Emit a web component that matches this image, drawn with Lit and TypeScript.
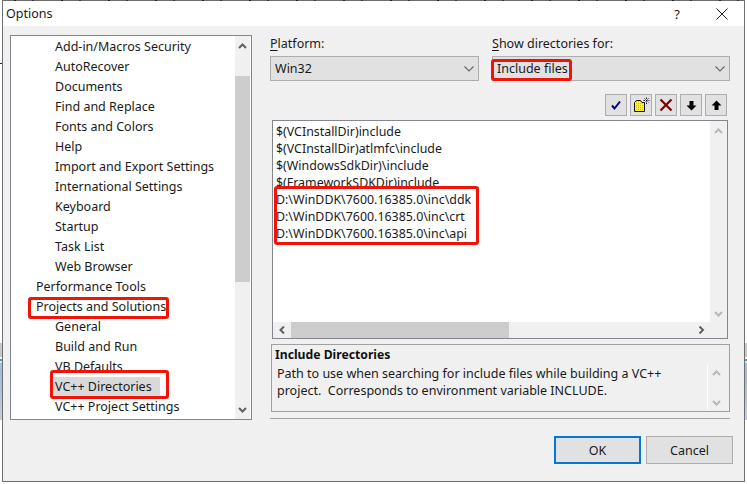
import { LitElement, html, css } from "lit";
import { customElement } from "lit/decorators.js";

const tree: [string, number, string?][] = [
  ["Add-in/Macros Security", 2],
  ["AutoRecover", 2],
  ["Documents", 2],
  ["Find and Replace", 2],
  ["Fonts and Colors", 2],
  ["Help", 2],
  ["Import and Export Settings", 2],
  ["International Settings", 2],
  ["Keyboard", 2],
  ["Startup", 2],
  ["Task List", 2],
  ["Web Browser", 2],
  ["Performance Tools", 1],
  ["Projects and Solutions", 1],
  ["General", 2],
  ["Build and Run", 2],
  ["VB Defaults", 2],
  ["VC++ Directories", 2, "sel"],
  ["VC++ Project Settings", 2],
];

const dirs = [
  "$(VCInstallDir)include",
  "$(VCInstallDir)atlmfc\\include",
  "$(WindowsSdkDir)\\include",
  "$(FrameworkSDKDir)include",
  "D:\\WinDDK\\7600.16385.0\\inc\\ddk",
  "D:\\WinDDK\\7600.16385.0\\inc\\crt",
  "D:\\WinDDK\\7600.16385.0\\inc\\api",
];

const chev = (d: string, color = "#606060") => {
  const p: Record<string, string> = {
    up: "M1 6 L4.5 2.5 L8 6",
    down: "M1 2 L4.5 5.5 L8 2",
    left: "M6 0.5 L2.5 4 L6 7.5",
    right: "M2.5 0.5 L6 4 L2.5 7.5",
  };
  return html`<svg width="9" height="8" viewBox="0 0 9 8"><path d=${p[d]} fill="none" stroke=${color} stroke-width="2"/></svg>`;
};

const combo = html`<svg width="10" height="6" viewBox="0 0 10 6"><path d="M0.5 0.5 L5 5 L9.5 0.5" fill="none" stroke="#666" stroke-width="1.1"/></svg>`;

@customElement("app-root")
export class AppRoot extends LitElement {
  static styles = css`
    :host { display: block; width: 747px; height: 484px; overflow: hidden; background: #fff; font-family: "Noto Sans", "Open Sans", sans-serif; font-size: 12.5px; color: #1a1a1a; }
    .root { position: relative; width: 747px; height: 484px; }
    .win { width: 743px; height: 482px; margin-left: 2px; border: 1px solid #6e6e6e; box-sizing: border-box; background: #f0f0f0; display: flex; flex-direction: column; }
    .title { height: 25px; flex: none; background: #fff; display: flex; align-items: center; padding-left: 3px; }
    .title .t { flex: 1; }
    .title .q { width: 20px; text-align: center; font-size: 13px; margin-right: 28px; }
    .title .x { margin-right: 15px; display: flex; }
    .body { flex: 1; display: flex; padding: 9px 11px 0 7px; gap: 18px; }
    .tree { width: 242px; height: 385px; flex: none; box-sizing: border-box; border: 1px solid #85858d; background: #fff; display: flex; }
    .items { flex: 1; overflow: hidden; padding-top: 1px; }
    .item { height: 20px; line-height: 20px; white-space: nowrap; display: flex; }
    .item span { padding: 0 4px 0 2px; }
    .l1 { padding-left: 23px; }
    .l2 { padding-left: 42px; }
    .item.sel span { background: #d9d9d9; padding-right: 8px; }
    .vbar { width: 15px; flex: none; margin-right: 1px; background: #f0f0f0; display: flex; flex-direction: column; align-items: center; padding: 2px 0 1px; box-sizing: border-box; }
    .b { display: flex; align-items: center; justify-content: center; flex: none; height: 16px; }
    .gap { height: 22px; flex: none; }
    .thumb { width: 100%; height: 206px; flex: none; background: #cdcdcd; }
    .track { flex: 1; }
    .right { flex: 1; display: flex; flex-direction: column; min-width: 0; }
    .selectors { display: flex; gap: 13px; }
    .fld { display: flex; flex-direction: column; gap: 4px; }
    .fld label { height: 17px; line-height: 17px; }
    u { text-decoration-thickness: 1px; text-underline-offset: 2px; }
    .combo { height: 25px; box-sizing: border-box; border: 1px solid #adadad; background: #e1e1e1; display: flex; align-items: center; justify-content: space-between; padding: 0 4px 0 4px; }
    .p { width: 209px; }
    .s { width: 238px; }
    .tools { display: flex; justify-content: flex-end; gap: 3px; padding: 13px 6px 0 0; height: 22px; }
    .tb { width: 22px; height: 22px; box-sizing: border-box; border: 1px solid #adadad; background: #e1e1e1; display: flex; align-items: center; justify-content: center; }
    .list { margin: 4px 0 0 2px; width: 456px; height: 219px; flex: none; box-sizing: border-box; border: 1px solid #85858d; background: #fff; display: grid; grid-template-columns: 1fr 17px; grid-template-rows: 1fr 16px; font-size: 12.4px; }
    .rows { padding: 2px 0 0 3px; overflow: hidden; }
    .rows div { height: 17px; line-height: 17px; white-space: nowrap; }
    .lv { background: #f0f0f0; display: flex; flex-direction: column; justify-content: space-between; align-items: center; padding-top: 2px; }
    .hbar { background: #f0f0f0; display: flex; align-items: center; }
    .hbar .b { width: 18px; }
    .hthumb { width: 218px; height: 16px; flex: none; background: #cdcdcd; }
    .corner { background: #f0f0f0; }
    .desc { margin: 5px 0 0 1px; width: 459px; height: 68px; flex: none; box-sizing: border-box; border: 1px solid #a0a0a0; display: grid; grid-template-columns: 1fr 22px; grid-template-rows: 20px 1fr; padding-left: 3px; }
    .desc h4 { margin: 0; grid-column: 1 / 3; font-size: 12.2px; line-height: 19px; font-weight: 700; color: #111; }
    .desc p { margin: 0; line-height: 17px; padding-left: 2px; white-space: pre; }
    .dv { border-left: 1px solid #fff; display: flex; flex-direction: column; justify-content: space-between; align-items: center; padding: 5px 4px 3px 0; height: 46px; box-sizing: border-box; margin-top: -1px; }
    .sep { margin-top: 6px; width: 460px; height: 1px; background: #a0a0a0; flex: none; }
    .btns { display: flex; justify-content: flex-end; gap: 5px; margin-top: 17px; }
    .btn { height: 28px; width: 87px; box-sizing: border-box; border: 1px solid #adadad; background: #e1e1e1; display: flex; align-items: center; justify-content: center; }
    .ok { border: 2px solid #0078d7; }
    .mark { position: absolute; border: 3px solid #f01408; border-radius: 3px; box-sizing: border-box; pointer-events: none; }
    .m1 { left: 28px; top: 297px; width: 141px; height: 22px; }
    .m2 { left: 50px; top: 370px; width: 119px; height: 29px; }
    .m3 { left: 491px; top: 59px; width: 81px; height: 22px; }
    .m4 { left: 274px; top: 186px; width: 205px; height: 59px; }
    .frag { position: absolute; top: 343px; height: 77px; width: 2px; background: linear-gradient(#c8c8c8 0 14px, #fff 14px 16px, #3f9fb0 16px 18px, #d8e8ee 18px 20px, #9fc0dc 20px, #a9bfdc 55%, #c9cedb); }
    .fl { left: 0; }
    .fr { left: 745px; }
    .top { position: absolute; left: 3px; top: 0; width: 741px; height: 1px; background: repeating-linear-gradient(90deg, #6e6e6e 0 11px, #222 11px 13px, #6e6e6e 13px 29px, #2c3a55 29px 31px, #6e6e6e 31px 47px); }
    .tick { position: absolute; left: 0; top: 63px; width: 2px; height: 1px; background: #222; }
  `;

  render() {
    return html`<div class="root">
      <div class="win">
        <div class="title">
          <div class="t">Options</div>
          <div class="q">?</div>
          <div class="x"><svg width="14" height="14" viewBox="0 0 14 14"><path d="M1.5 1.5 L12.5 12.5 M12.5 1.5 L1.5 12.5" stroke="#222" stroke-width="1" fill="none"/></svg></div>
        </div>
        <div class="body">
          <div class="tree">
            <div class="items">
              ${tree.map(([t, l, s]) => html`<div class="item l${l} ${s ?? ""}"><span>${t}</span></div>`)}
            </div>
            <div class="vbar">
              <div class="b">${chev("up")}</div>
              <div class="gap"></div>
              <div class="thumb"></div>
              <div class="track"></div>
              <div class="b">${chev("down")}</div>
            </div>
          </div>
          <div class="right">
            <div class="selectors">
              <div class="fld p"><label><u>P</u>latform:</label><div class="combo"><span>Win32</span>${combo}</div></div>
              <div class="fld s"><label><u>S</u>how directories for:</label><div class="combo"><span>Include files</span>${combo}</div></div>
            </div>
            <div class="tools">
              <div class="tb"><svg width="12" height="12" viewBox="0 0 12 12"><path d="M2 6.5 L4.5 9.5 L10 2.5" fill="none" stroke="#000080" stroke-width="2"/></svg></div>
              <div class="tb"><svg width="18" height="16" viewBox="0 0 18 16">
                <defs><pattern id="dith" width="2" height="2" patternUnits="userSpaceOnUse"><rect width="2" height="2" fill="#fff030"/><rect width="1" height="1" fill="#b8b890"/></pattern></defs>
                <path d="M2.5 14.5 V5.5 L4.5 3.5 H8.5 L10 5.5 H12.5 V14.5 Z" fill="url(#dith)" stroke="#111"/>
                <path d="M14.5 0.5 V7 M11.5 3.5 H17.5 M12.5 1.5 L16.5 5.5 M16.5 1.5 L12.5 5.5" stroke="#222" stroke-width="1" stroke-dasharray="1.5 1"/>
              </svg></div>
              <div class="tb"><svg width="14" height="14" viewBox="0 0 14 14"><path d="M1.5 1.5 L12.5 12.5 M12.5 1.5 L1.5 12.5" stroke="#7f0000" stroke-width="2.2" fill="none"/></svg></div>
              <div class="tb"><svg width="11" height="11" viewBox="0 0 11 11"><path d="M3.5 1 H7.5 V5.5 H10.5 L5.5 10.5 L0.5 5.5 H3.5 Z" fill="#000"/></svg></div>
              <div class="tb"><svg width="11" height="11" viewBox="0 0 11 11"><path d="M5.5 0.5 L10.5 5.5 H7.5 V10 H3.5 V5.5 H0.5 Z" fill="#000"/></svg></div>
            </div>
            <div class="list">
              <div class="rows">${dirs.map((d) => html`<div>${d}</div>`)}</div>
              <div class="lv">
                <div class="b">${chev("up", "#b8b8b8")}</div>
                <div class="b">${chev("down", "#b8b8b8")}</div>
              </div>
              <div class="hbar">
                <div class="b">${chev("left")}</div>
                <div class="hthumb"></div>
                <div class="track"></div>
                <div class="b">${chev("right")}</div>
              </div>
              <div class="corner"></div>
            </div>
            <div class="desc">
              <h4>Include Directories</h4>
              <p>Path to use when searching for include files while building a VC++
project.  Corresponds to environment variable INCLUDE.</p>
              <div class="dv">${chev("up", "#b8b8b8")}${chev("down", "#b8b8b8")}</div>
            </div>
            <div class="sep"></div>
            <div class="btns">
              <div class="btn ok">OK</div>
              <div class="btn">Cancel</div>
            </div>
          </div>
        </div>
      </div>
      <div class="top"></div>
      <div class="tick"></div>
      <div class="frag fl"></div>
      <div class="frag fr"></div>
      <div class="mark m1"></div>
      <div class="mark m2"></div>
      <div class="mark m3"></div>
      <div class="mark m4"></div>
    </div>`;
  }
}
